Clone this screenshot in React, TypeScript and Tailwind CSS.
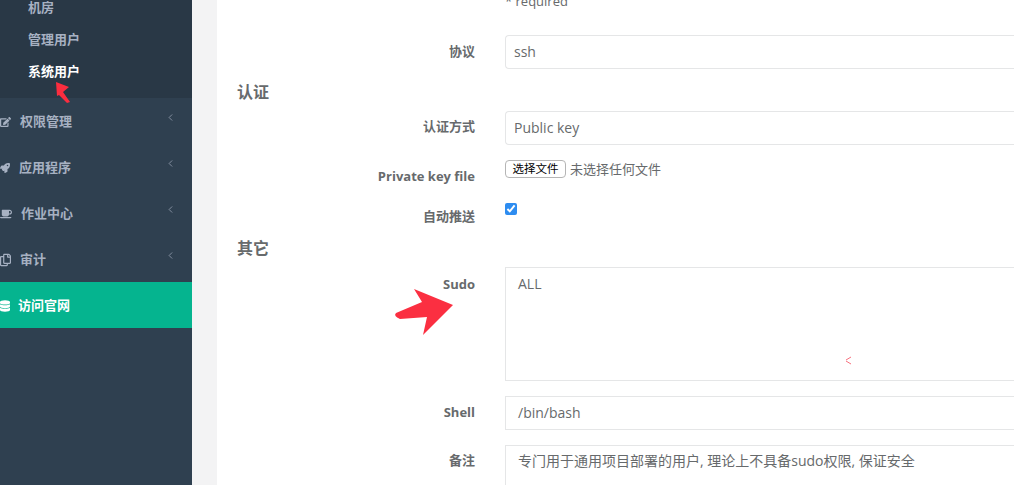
import type { ReactNode } from "react";
import { ChevronLeft } from "lucide-react";
import { FaCoffee, FaDatabase, FaEdit, FaRegCopy, FaRocket } from "react-icons/fa";

const font = "font-['Open_Sans','Noto_Sans_CJK_SC',sans-serif]";

const SubItem = ({ label, active }: { label: string; active?: boolean }) => (
  <div className={`h-8 pl-7 flex items-center text-[13px] font-semibold ${active ? "text-white" : "text-[#a7b1c2]"}`}>
    {label}
  </div>
);

const NavItem = ({ icon, label, iconWidth }: { icon: ReactNode; label: string; iconWidth: string }) => (
  <div className="h-[46px] pt-px flex items-center text-[13px] font-semibold text-[#a7b1c2]">
    <span className={`${iconWidth} flex justify-end pr-[9px] text-[14px] shrink-0`}>{icon}</span>
    <span>{label}</span>
    <ChevronLeft size={11} strokeWidth={1.5} className="ml-auto mr-[16px] -mt-2" />
  </div>
);

const Sidebar = () => (
  <aside className="w-[192px] shrink-0 bg-[#2f4050] overflow-hidden">
    <div className="h-[106px] -mt-2 bg-[#293846]">
      <SubItem label="机房" />
      <SubItem label="管理用户" />
      <SubItem label="系统用户" active />
    </div>
    <NavItem icon={<FaEdit />} label="权限管理" iconWidth="w-5" />
    <NavItem icon={<FaRocket />} label="应用程序" iconWidth="w-[19px]" />
    <NavItem icon={<FaCoffee />} label="作业中心" iconWidth="w-[21px]" />
    <NavItem icon={<FaRegCopy />} label="审计" iconWidth="w-5" />
    <div className="h-[46px] pt-px flex items-center bg-[#05b48f] text-[13px] font-bold text-white">
      <span className="w-[18px] shrink-0 flex justify-end pr-2 text-[12px]">
        <FaDatabase />
      </span>
      <span>访问官网</span>
    </div>
  </aside>
);

const Row = ({ label, className, children }: { label: string; className?: string; children: ReactNode }) => (
  <div className={`flex ${className ?? ""}`}>
    <label className="w-[238px] text-right text-[13px] font-bold leading-[18px] text-[#676a6c] shrink-0">
      {label}
    </label>
    <div className="ml-[30px] flex-1 min-w-0">{children}</div>
  </div>
);

const Input = ({ value }: { value: string }) => (
  <div className="h-[34px] w-[560px] flex items-center rounded-l border border-r-0 border-[#e5e6e7] pl-2 pb-[2px] text-[14px] text-[#676a6c]">
    {value}
  </div>
);

const Section = ({ title, className }: { title: string; className?: string }) => (
  <h3 className={`text-[16px] font-bold leading-5 text-[#676a6c] ${className ?? ""}`}>{title}</h3>
);

export default function App() {
  return (
    <div className={`relative flex h-[485px] w-[1014px] overflow-hidden bg-white ${font}`}>
      <Sidebar />
      <div className="w-[25px] shrink-0 bg-[#f3f3f4]" />
      <main className="flex-1 pl-5 overflow-hidden">
        <div className="-mt-[8px] ml-[268px] h-[18px] text-[13px] leading-[18px] text-[#676a6c]">* required</div>
        <Row label="协议" className="mt-[25px] [&>label]:pt-[7px]">
          <Input value="ssh" />
        </Row>
        <Section title="认证" className="mt-[13px]" />
        <Row label="认证方式" className="mt-[9px] [&>label]:pt-[6px]">
          <Input value="Public key" />
        </Row>
        <Row label="Private key file" className="mt-[15px] h-[31px] [&>label]:pt-[7px]">
          <div className="flex items-center text-[13px] leading-[18px] text-[#676a6c]">
            <button className="h-[18px] w-[61px] rounded-[4px] border border-[#b5b5b5] bg-white text-[11.5px] leading-none text-black">
              选择文件
            </button>
            <span className="ml-[4px] -mt-px">未选择任何文件</span>
          </div>
        </Row>
        <Row label="自动推送" className="mt-[10px] h-[37px] [&>label]:pt-[6px]">
          <input type="checkbox" defaultChecked className="mt-[2px] block h-3 w-3 accent-[#2d8cf0]" />
        </Row>
        <Section title="其它" />
        <Row label="Sudo" className="mt-[9px] [&>label]:pt-2">
          <div className="h-[114px] w-[560px] border border-r-0 border-[#e5e6e7] pl-3 pt-[7px] text-[14px] leading-[18px] text-[#676a6c]">
            ALL
          </div>
        </Row>
        <Row label="Shell" className="mt-[15px] [&>label]:pt-[7px]">
          <div className="h-[34px] w-[560px] flex items-center border border-r-0 border-[#e5e6e7] pl-3 pb-[2px] text-[14px] text-[#676a6c]">
            /bin/bash
          </div>
        </Row>
        <Row label="备注" className="mt-[15px] [&>label]:pt-[6px]">
          <div className="h-[60px] w-[560px] border border-r-0 border-[#e5e6e7] pl-3 pt-[6px] text-[14px] leading-[18px] text-[#676a6c] whitespace-nowrap">
            专门用于通用项目部署的用户, 理论上不具备sudo权限, 保证安全
          </div>
        </Row>
      </main>

      {/* annotation arrows */}
      <svg className="absolute left-[54px] top-[80px]" width="20" height="26" viewBox="0 0 20 26">
        <path d="M2 2 L15 7 L9 12 L16 22 L13 23 L5 15 L3 16 Z" fill="#fb2d3f" />
      </svg>
      <svg className="absolute left-[392px] top-[288px]" width="66" height="50" viewBox="0 0 66 50">
        <path d="M22 1 L61 17 L31 47 L35 29 L8 31 Q1 28 4 25 L30 14 Z" fill="#fb2f41" />
      </svg>
      <svg className="absolute left-[845px] top-[356px]" width="8" height="10" viewBox="0 0 8 10">
        <path d="M6 1 L1 4 M1 5 L6 8" stroke="#f7707e" strokeWidth="1" fill="none" />
      </svg>
    </div>
  );
}
